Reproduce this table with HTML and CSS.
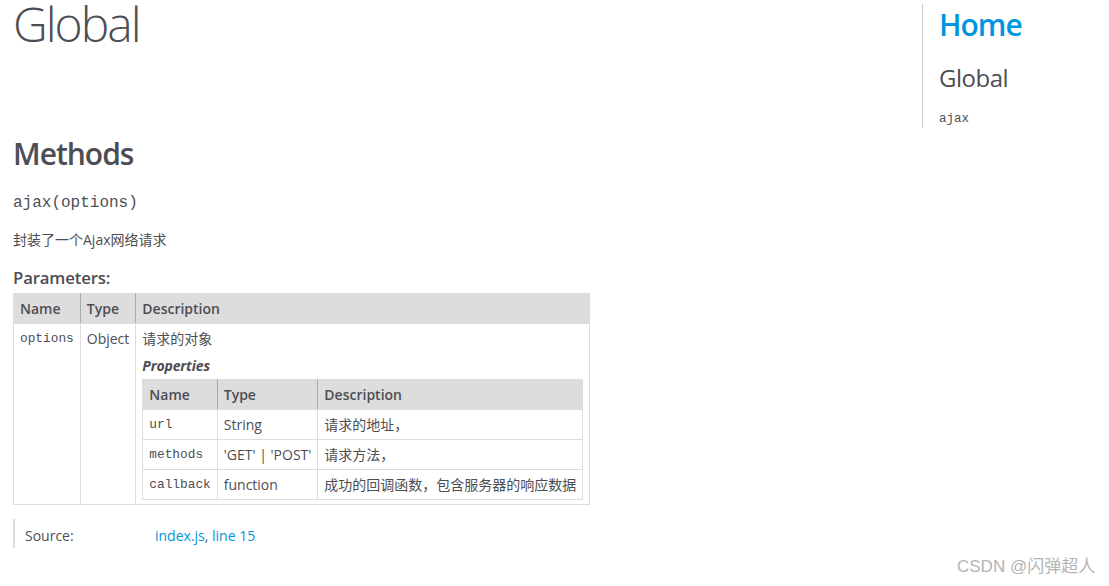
FILE: index.html
```html
<!DOCTYPE html>
<html lang="zh">
<head>
<meta charset="utf-8">
<title>Global</title>
<link rel="stylesheet" href="styles.css">
</head>
<body>
<div class="page">
  <div class="main">
    <h1 class="page-title">Global</h1>
    <h3 class="subsection-title">Methods</h3>
    <h4 class="name">ajax(options)</h4>
    <p class="description">封装了一个Ajax网络请求</p>
    <h5 class="params-title">Parameters:</h5>
    <table class="params">
      <thead>
        <tr><th>Name</th><th>Type</th><th class="last">Description</th></tr>
      </thead>
      <tbody>
        <tr>
          <td class="mono">options</td>
          <td>Object</td>
          <td class="desc-cell">
            <div class="cell-text">请求的对象</div>
            <h6 class="props-title">Properties</h6>
            <table class="params">
              <thead>
                <tr><th>Name</th><th>Type</th><th class="last">Description</th></tr>
              </thead>
              <tbody>
                <tr><td class="mono">url</td><td>String</td><td>请求的地址，</td></tr>
                <tr><td class="mono">methods</td><td>'GET' | 'POST'</td><td>请求方法，</td></tr>
                <tr><td class="mono">callback</td><td>function</td><td>成功的回调函数，包含服务器的响应数据</td></tr>
              </tbody>
            </table>
          </td>
        </tr>
      </tbody>
    </table>
    <dl class="details">
      <dt>Source:</dt>
      <dd><a href="#">index.js</a>, <a href="#">line 15</a></dd>
    </dl>
  </div>
  <nav class="nav">
    <h2 class="nav-home"><a href="#">Home</a></h2>
    <h3 class="nav-global">Global</h3>
    <ul class="nav-list">
      <li><a href="#">ajax</a></li>
    </ul>
  </nav>
</div>
<div class="watermark">CSDN @闪弹超人</div>
</body>
</html>
```

FILE: styles.css
```css
html, body {
  margin: 0;
  padding: 0;
  background: #fff;
}
body {
  font-family: "Open Sans", "Noto Sans CJK SC", sans-serif;
  font-size: 14px;
  line-height: 1.5;
  color: #4d4e53;
  width: 1109px;
  height: 586px;
  overflow: hidden;
  position: relative;
}
a, a:visited {
  color: #0095dd;
  text-decoration: none;
}
.page {
  display: flex;
  align-items: flex-start;
}
.main {
  flex: 1;
  padding-left: 13px;
}
h1, h2, h3, h4, h5, h6 { margin: 0; }

.page-title {
  font-size: 48px;
  font-weight: 300;
  letter-spacing: -2px;
  line-height: 48px;
}
.subsection-title {
  margin-top: 83px;
  font-size: 30px;
  font-weight: 600;
  letter-spacing: -1px;
  line-height: 45px;
}
.name {
  margin-top: 15px;
  font-family: "Liberation Mono", monospace;
  font-weight: normal;
  font-size: 16px;
  line-height: 24px;
}
.description {
  margin: 14px 0 0;
  line-height: 21px;
  height: 21px;
}
.params-title {
  margin: 15px 0 3px;
  font-size: 16.8px;
  font-weight: 600;
  letter-spacing: -0.17px;
  line-height: 25px;
}
.params {
  border-collapse: collapse;
  border-spacing: 0;
}
.params th, .params td {
  border: 1px solid #ddd;
  text-align: left;
  vertical-align: top;
  padding: 4px 6px;
  line-height: 21px;
}
.params thead tr {
  background: #ddd;
}
.params th {
  font-weight: 600;
  border-right: 1px solid #aaa;
}
.params th.last {
  border-right: 1px solid #ddd;
}
.mono {
  font-family: "Liberation Mono", monospace;
  font-size: 12.8px;
}
.cell-text {
  height: 21px;
}
.props-title {
  margin: 6px 0 3px;
  font-size: 14px;
  font-style: italic;
  font-weight: 700;
  line-height: 21px;
  letter-spacing: -0.14px;
}
.details {
  margin: 14px 0 0;
  border-left: 2px solid #ddd;
  display: grid;
  grid-template-columns: 140px auto;
  padding-bottom: 2px;
}
.details dt {
  padding: 6px 0 0 10px;
  line-height: 21px;
}
.details dd {
  margin: 0;
  padding-top: 6px;
  line-height: 21px;
}
.nav {
  width: 187px;
  margin-top: 4px;
  border-left: 1px solid #ccc;
  padding-left: 16px;
  box-sizing: border-box;
}
.nav-home {
  font-size: 30px;
  font-weight: 600;
  letter-spacing: -1px;
  line-height: 42px;
}
.nav-global {
  margin-top: 14px;
  font-size: 24px;
  font-weight: 400;
  letter-spacing: -0.5px;
  line-height: 36px;
}
.nav-list {
  list-style: none;
  margin: 12px 0 0;
  padding: 0;
}
.nav-list a {
  font-family: "Liberation Mono", monospace;
  font-size: 12.5px;
  line-height: 18px;
  color: #4d4e53;
}
.nav-list li {
  line-height: 18px;
}
.watermark {
  position: absolute;
  left: 957px;
  top: 556px;
  font-family: "Liberation Sans", "Noto Sans CJK SC", sans-serif;
  font-size: 17px;
  line-height: 22px;
  color: #b4b4b4;
}
```
